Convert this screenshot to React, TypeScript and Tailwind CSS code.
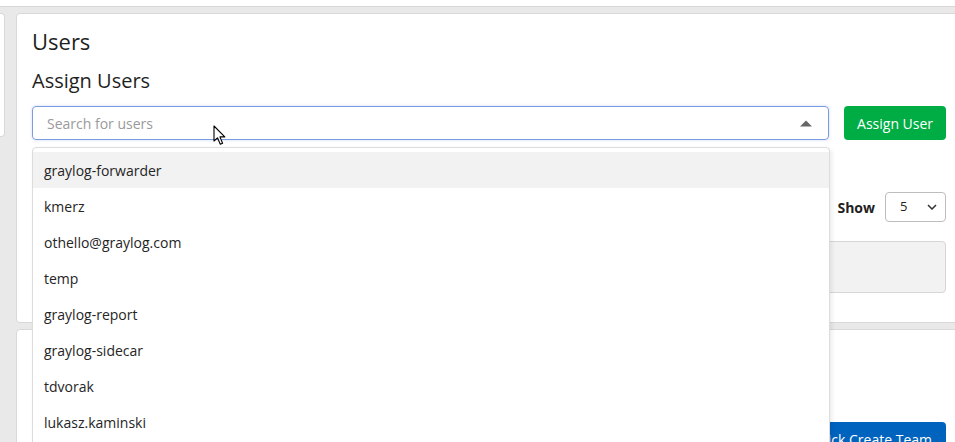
const users = [
  "graylog-forwarder",
  "kmerz",
  "othello@graylog.com",
  "temp",
  "graylog-report",
  "graylog-sidecar",
  "tdvorak",
  "lukasz.kaminski",
];

function Cursor() {
  return (
    <svg
      className="absolute left-[213px] top-[125px]"
      width="14"
      height="21"
      viewBox="0 0 14 21"
    >
      <path
        d="M1 1 L1 16 L4.5 12.8 L7.3 19.2 L9.6 18.2 L6.9 11.9 L11.8 11.9 Z"
        fill="#fff"
        stroke="#000"
        strokeWidth="1.1"
        strokeLinejoin="round"
      />
    </svg>
  );
}

function UserMenu() {
  return (
    <div className="absolute left-0 top-[41px] w-[798px] h-[320px] bg-white border border-[#dcdcdc] rounded-t-[4px] pt-[4px] shadow-[2px_2px_4px_rgba(0,0,0,0.08)] z-10">
      {users.map((u, i) => (
        <div
          key={u}
          className={
            "h-[36px] flex items-center pl-[11px] text-[14px] text-[#252525] " +
            (i === 0 ? "bg-[#f2f2f2]" : "")
          }
        >
          {u}
        </div>
      ))}
    </div>
  );
}

export default function App() {
  return (
    <div
      className="relative w-[955px] h-[442px] overflow-hidden bg-white text-[#1f1f1f]"
      style={{ fontFamily: '"Open Sans", "Noto Sans", sans-serif' }}
    >
      <div className="h-[6px] bg-white" />
      <div className="h-[436px] bg-[#e9e9e9] border-t border-[#d6d6d6] pt-[6px] flex gap-[11px] overflow-hidden">
        <div className="w-[5px] h-[124px] shrink-0 bg-white border border-l-0 border-[#d9d9d9] rounded-r-[4px]" />

        <div className="w-[946px] shrink-0 flex flex-col gap-[6px]">
          <div className="bg-white border border-[#d9d9d9] rounded-[4px] px-[15px] pt-[15px] pb-[29px]">
            <h2 className="text-[22px] leading-[24px]">Users</h2>
            <h3 className="mt-[17px] text-[20px] leading-[22px]">Assign Users</h3>

            <div className="mt-[14px] flex gap-[15px]">
              <div className="relative w-[798px]">
                <div className="h-[34px] border border-[#7b9be0] rounded-[4px] flex items-center justify-between pl-[14px] pr-[16px] shadow-[0_0_3px_rgba(102,140,220,0.35)]">
                  <span className="text-[14px] text-[#9a9a9a]">Search for users</span>
                  <svg width="12" height="7" viewBox="0 0 12 7">
                    <path d="M0 6.5 L6 0.5 L12 6.5 Z" fill="#666" />
                  </svg>
                </div>
                <UserMenu />
              </div>
              <button className="w-[102px] h-[34px] rounded-[4px] bg-[#00ad45] text-white text-[14px]">
                Assign User
              </button>
            </div>

            <div className="mt-[52px] flex justify-end items-center gap-[10px]">
              <span className="text-[14px] font-bold">Show</span>
              <div className="w-[61px] h-[30px] border border-[#bdbdbd] rounded-[4px] flex items-center justify-between pl-[14px] pr-[8px]">
                <span className="text-[13px]">5</span>
                <svg width="10" height="6" viewBox="0 0 10 6">
                  <path d="M1 1 L5 5 L9 1" fill="none" stroke="#333" strokeWidth="1.5" />
                </svg>
              </div>
            </div>

            <div className="mt-[19px] h-[52px] bg-[#f2f2f2] border border-[#d6d6d6] rounded-[4px]" />
          </div>

          <div className="flex-1 bg-white border border-[#d9d9d9] rounded-[4px] px-[15px] pt-[92px]">
            <div className="flex justify-end">
              <button className="h-[34px] px-[14px] rounded-[4px] bg-[#0063be] text-white text-[14px]">
                Quick Create Team
              </button>
            </div>
          </div>
        </div>
      </div>
      <Cursor />
    </div>
  );
}
